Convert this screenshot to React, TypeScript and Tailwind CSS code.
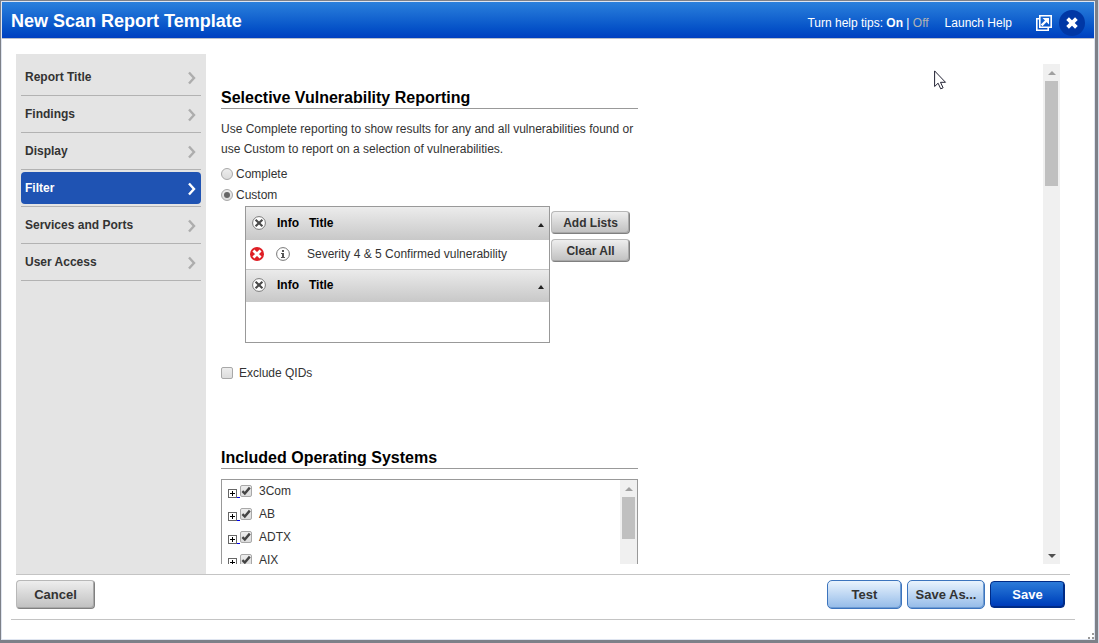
import { useState } from 'react';

const NAV_ITEMS = ['Report Title', 'Findings', 'Display', 'Filter', 'Services and Ports', 'User Access'];
const SYSTEMS = ['3Com', 'AB', 'ADTX', 'AIX'];

function Chevron() {
    return (
        <svg width="8" height="14" viewBox="0 0 8 14" fill="none" stroke="currentColor" strokeWidth="2.4" aria-hidden="true">
            <path d="M1 1.5 6 7 1 12.5" />
        </svg>
    );
}

function RemoveIcon() {
    return (
        <svg width="14" height="14" viewBox="0 0 14 14" aria-hidden="true">
            <circle cx="7" cy="7" r="6.4" fill="#fff" stroke="#777" strokeWidth="1" />
            <path d="M3.6 3.8 10.4 10.2M10.4 3.8 3.6 10.2" stroke="#4a4a4a" strokeWidth="2.2" />
        </svg>
    );
}

function DeleteIcon() {
    return (
        <svg width="14" height="14" viewBox="0 0 14 14" aria-hidden="true">
            <circle cx="7" cy="7" r="7" fill="#df1f26" />
            <path d="M3.4 3.4 10.6 10.6M10.6 3.4 3.4 10.6" stroke="#fff" strokeWidth="2.8" />
        </svg>
    );
}

function InfoIcon() {
    return (
        <svg width="14" height="14" viewBox="0 0 14 14" aria-hidden="true">
            <circle cx="7" cy="7" r="6.4" fill="#fff" stroke="#777" strokeWidth="1" />
            <path d="M6 3h2v2H6zM5 6h3v4h1v1H5v-1h1V7H5z" fill="#555" />
        </svg>
    );
}

function SortArrow() {
    return (
        <svg width="6" height="4" viewBox="0 0 6 4" className="mt-1 ml-auto" aria-hidden="true">
            <path d="M3 0 6 4H0z" fill="#222" />
        </svg>
    );
}

function ScrollArrow({ down }: { down?: boolean }) {
    return (
        <span className="flex h-[17px] items-center justify-center">
            <svg width="8" height="4" viewBox="0 0 8 4" aria-hidden="true">
                <path d={down ? 'M0 0h8L4 4z' : 'M0 4h8L4 0z'} fill={down ? '#505050' : '#a0a0a0'} />
            </svg>
        </span>
    );
}

function ListHeader() {
    return (
        <tr className="h-[33px] bg-linear-to-b from-[#ececec] to-[#c8c8c8] text-left text-black">
            <th className="w-[26px] pb-[2px] pl-[6px]"><RemoveIcon /></th>
            <th className="w-[32px] pb-[2px] pl-[5px]">Info</th>
            <th className="pr-[5px] pb-[2px] pl-[5px]">
                <span className="flex items-center">Title<SortArrow /></span>
            </th>
        </tr>
    );
}

function CheckBox({ id, checked, onChange }: { id: string; checked?: boolean; onChange?: () => void }) {
    return (
        <span className="relative block size-3 shrink-0">
            <input
                id={id}
                type="checkbox"
                checked={checked}
                onChange={onChange}
                className="block size-3 appearance-none rounded-[2px] border border-[#a8a8a8] bg-linear-to-b from-[#ededed] to-[#dcdcdc]"
            />
            {checked && (
                <svg width="12" height="12" viewBox="0 0 12 12" className="pointer-events-none absolute inset-0" aria-hidden="true">
                    <path d="M2.4 6.2 4.8 8.5 9.8 2.6" fill="none" stroke="#444" strokeWidth="2.4" />
                </svg>
            )}
        </span>
    );
}

function Radio({ label, value, selected, onSelect }: { label: string; value: string; selected: string; onSelect: (v: string) => void }) {
    return (
        <label className="flex h-[21px] items-center gap-[3px]">
            <input
                type="radio"
                name="reporting"
                value={value}
                checked={selected === value}
                onChange={() => onSelect(value)}
                className="flex size-3 appearance-none items-center justify-center rounded-full border border-[#a8a8a8] bg-linear-to-b from-[#ededed] to-[#dcdcdc] before:hidden before:size-[6px] before:rounded-full before:bg-[#666] checked:before:block"
            />
            {label}
        </label>
    );
}

const grayButton = 'rounded-[4px] border border-[#b8b8b8] border-r-[#808080] border-b-[#808080] bg-linear-to-b from-[#eeeeee] to-[#c0c0c0] font-bold text-[#333] shadow-[inset_-1px_-1px_0_#a8a8a8]';
const lightButton = 'h-[29px] rounded-[5px] border border-[#3c74bd] bg-linear-to-b from-[#e9f3fd] to-[#94bbe8] text-[13px] font-bold text-[#333] shadow-[inset_-1px_-1px_0_#6d9bd3]';

export default function App() {
    const [active, setActive] = useState('Filter');
    const [mode, setMode] = useState('custom');
    const [exclude, setExclude] = useState(false);
    const [off, setOff] = useState<string[]>([]);

    const toggle = (name: string) => {
        setOff(off.includes(name) ? off.filter((n) => n !== name) : [...off, name]);
    };

    return (
        <div className="relative h-screen border-r border-[#d5dbe8] bg-white font-['Liberation_Sans',Arial,sans-serif] text-[12px] text-[#333]">
            <div className="flex h-full flex-col border-t border-r-[3px] border-b-[3px] border-l border-[#7d8088]">
                <div className="flex min-h-0 flex-1 flex-col border border-[#dfe5f0]">
                    <header className="flex h-[37px] shrink-0 items-center border-b border-[#b9bfcc] bg-linear-to-b from-[#2b80dc] to-[#003fc0] px-[9px] text-white">
                        <h1 className="pt-[2px] text-[18px] font-bold">New Scan Report Template</h1>
                        <div className="mt-[6px] ml-auto flex items-center">
                            <span>Turn help tips:&nbsp;</span>
                            <button className="font-bold">On</button>
                            <span>&nbsp;|&nbsp;</span>
                            <button className="text-[#b3b3b3]">Off</button>
                            <a href="#help" className="ml-4">Launch Help</a>
                            <button aria-label="Open in new window" className="ml-6">
                                <svg width="16" height="16" viewBox="0 0 16 16" fill="none" stroke="#fff" strokeWidth="1.6" aria-hidden="true">
                                    <path d="M3.8.8h11.4v11.4H3.8z" />
                                    <path d="M3 3.8H.8v11.4h11.4V13" />
                                    <path d="M5.6 10.4l5.4-5.4" strokeWidth="2.4" />
                                    <path d="M6.5 3H13v6.5z" fill="#fff" stroke="none" />
                                </svg>
                            </button>
                            <button aria-label="Close" className="ml-[7px] flex size-[26px] items-center justify-center rounded-full bg-[#0037a5]">
                                <svg width="12" height="12" viewBox="0 0 12 12" stroke="#fff" strokeWidth="3.8" aria-hidden="true">
                                    <path d="M1.6 1.6 10.4 10.4M10.4 1.6 1.6 10.4" />
                                </svg>
                            </button>
                        </div>
                    </header>

                    <div className="mr-6 ml-[14px] flex min-h-0 flex-1 border-b border-[#c4c4c4] pt-[15px]">
                        <nav className="w-[190px] shrink-0 bg-[#e4e4e4] p-[5px]">
                            <ul>
                                {NAV_ITEMS.map((item) => (
                                    <li key={item} className="h-[37px] border-b border-[#b2b2b2] py-[2px]">
                                        <button
                                            onClick={() => setActive(item)}
                                            className={`flex h-8 w-full items-center justify-between rounded-[4px] pr-[5px] pl-1 font-bold ${active === item ? 'bg-[#1f53b3] text-white' : 'text-[#333]'}`}
                                        >
                                            {item}
                                            <span className={active === item ? 'pt-[2px] text-white' : 'pt-[2px] text-[#adadad]'}><Chevron /></span>
                                        </button>
                                    </li>
                                ))}
                            </ul>
                        </nav>

                        <div className="my-[10px] mr-[10px] flex min-w-0 flex-1">
                            <main className="min-w-0 flex-1 overflow-hidden pt-6 pl-[15px]">
                                <section className="h-[360px] max-w-[417px]">
                                    <h2 className="border-b border-[#999] text-[16px] leading-5 font-bold text-black">Selective Vulnerability Reporting</h2>
                                    <p className="mt-[10px] leading-5 whitespace-nowrap">
                                        Use Complete reporting to show results for any and all vulnerabilities found or<br />
                                        use Custom to report on a selection of vulnerabilities.
                                    </p>
                                    <div className="pt-1 pb-px">
                                        <Radio label="Complete" value="complete" selected={mode} onSelect={setMode} />
                                        <Radio label="Custom" value="custom" selected={mode} onSelect={setMode} />
                                    </div>
                                    <div className="ml-6 flex items-start gap-px">
                                        <div className="h-[137px] w-[305px] border border-[#999]">
                                            <table className="w-full table-fixed">
                                                <thead><ListHeader /></thead>
                                                <tbody>
                                                    <tr className="h-[29px] border-b border-[#c4c4c4]">
                                                        <td className="pl-[4px]"><DeleteIcon /></td>
                                                        <td className="pl-[4px]"><InfoIcon /></td>
                                                        <td className="pl-[3px]">Severity 4 &amp; 5 Confirmed vulnerability</td>
                                                    </tr>
                                                    <ListHeader />
                                                </tbody>
                                            </table>
                                        </div>
                                        <div className="mt-[5px] flex w-[79px] flex-col gap-[5px]">
                                            <button className={`h-[23px] ${grayButton}`}>Add Lists</button>
                                            <button className={`h-[23px] ${grayButton}`}>Clear All</button>
                                        </div>
                                    </div>
                                    <div className="mt-[21px] flex items-center gap-[6px]">
                                        <CheckBox id="exclude" checked={exclude} onChange={() => setExclude(!exclude)} />
                                        <label htmlFor="exclude">Exclude QIDs</label>
                                    </div>
                                </section>

                                <section className="max-w-[417px]">
                                    <h2 className="border-b border-[#999] text-[16px] leading-5 font-bold text-black">Included Operating Systems</h2>
                                    <div className="mt-[10px] flex h-[140px] border border-[#999]">
                                        <ul className="flex flex-1 flex-col gap-px pl-[6px]">
                                            {SYSTEMS.map((name) => (
                                                <li key={name} className="flex h-[22px] items-center leading-3">
                                                    <button aria-label={`Expand ${name}`} className="mt-1 flex items-end">
                                                        <svg width="9" height="9" viewBox="0 0 9 9" shapeRendering="crispEdges" aria-hidden="true">
                                                            <path d="M.5.5h8v8h-8z" fill="#fff" stroke="#666" />
                                                            <path d="M2 4.5h5M4.5 2v5" stroke="#000" />
                                                        </svg>
                                                        <span className="h-px w-[3px] bg-[#0000ee]" />
                                                    </button>
                                                    <CheckBox id={`os-${name}`} checked={!off.includes(name)} onChange={() => toggle(name)} />
                                                    <label htmlFor={`os-${name}`} className="ml-[7px]">{name}</label>
                                                </li>
                                            ))}
                                        </ul>
                                        <div className="w-[17px] bg-[#f0f0f0]">
                                            <ScrollArrow />
                                            <div className="mx-[2px] h-[42px] bg-[#c0c0c0]" />
                                        </div>
                                    </div>
                                </section>
                            </main>

                            <div className="flex w-[17px] flex-col bg-[#f0f0f0]">
                                <ScrollArrow />
                                <div className="mx-[2px] h-[105px] bg-[#c0c0c0]" />
                                <span className="mt-auto"><ScrollArrow down /></span>
                            </div>
                        </div>
                    </div>

                    <footer className="mr-[19px] mb-[19px] ml-[9px] flex h-[45px] shrink-0 items-center border-b border-[#c4c4c4] pr-[10px] pb-[5px] pl-[5px]">
                        <button className={`h-[29px] w-[79px] text-[13px] ${grayButton}`}>Cancel</button>
                        <div className="ml-auto flex items-center gap-[5px]">
                            <button className={`w-[75px] ${lightButton}`}>Test</button>
                            <button className={`w-[78px] ${lightButton}`}>Save As...</button>
                            <button className="h-[27px] w-[75px] rounded-[4px] border border-[#002b86] bg-linear-to-b from-[#2c7bd9] to-[#0038b8] text-[13px] font-bold text-white shadow-[inset_-1px_-1px_0_#002b86]">Save</button>
                        </div>
                    </footer>
                </div>
            </div>

            {/* mouse pointer */}
            <svg width="13" height="20" viewBox="0 0 13 20" className="pointer-events-none absolute top-[70px] left-[934px]" aria-hidden="true">
                <path d="M.6.9v15.6l3.5-3.3 2.6 5.6 2.4-1-2.6-5.5h5z" fill="#fff" stroke="#222233" />
            </svg>
            {/* resize grip */}
            <svg width="6" height="6" viewBox="0 0 6 6" className="absolute right-[4px] bottom-[4px]" fill="#999" aria-hidden="true">
                <path d="M4 0h2v2H4zM4 4h2v2H4zM0 4h2v2H0z" />
            </svg>
        </div>
    );
}
